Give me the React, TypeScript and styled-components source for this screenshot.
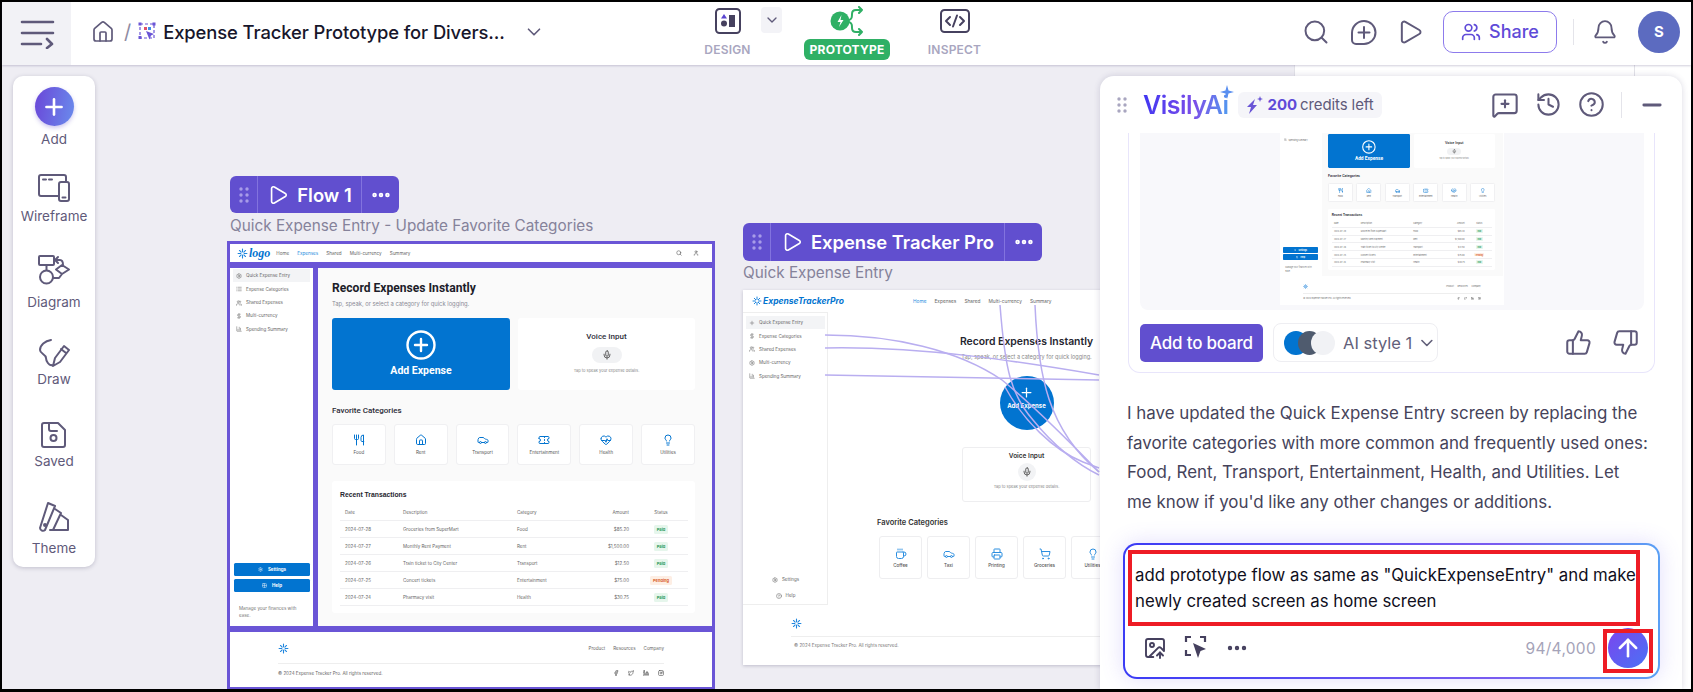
import React from "react";
import styled, { createGlobalStyle } from "styled-components";
import {
  ArrowUp,
  Bell,
  Car,
  ChartColumn,
  ChevronDown,
  CircleHelp,
  Coffee,
  DollarSign,
  Ellipsis,
  Facebook,
  Grid2x2,
  HeartPulse,
  History,
  House,
  ImageUp,
  Instagram,
  Lightbulb,
  Linkedin,
  List,
  MessageSquarePlus,
  Mic,
  Minus,
  Play,
  Plus,
  Printer,
  Search,
  Settings,
  ShoppingCart,
  ThumbsDown,
  ThumbsUp,
  Ticket,
  Twitter,
  User,
  Users,
  Utensils,
} from "lucide-react";

const GlobalStyle = createGlobalStyle`
  html, body {
    margin: 0;
    padding: 0;
    background: #000;
  }
  * {
    box-sizing: border-box;
  }
`;

const ink = "#5f5a7a";
const blue = "#0274d0";
const purple = "#6a55d6";

/* ---------- drawn icons ---------- */

const MenuIcon = () => (
  <svg width="36" height="30" viewBox="0 0 36 30" fill="none" stroke={ink} strokeWidth="2.6" strokeLinecap="round" strokeLinejoin="round">
    <path d="M3 3h31M3 14h31M3 25h19M28 20l5 5-5 4" />
  </svg>
);

const FileMark = () => (
  <svg width="18" height="20" viewBox="0 0 18 20" fill="none">
    <path d="M2 2h14v14H2z" stroke="#6a55d6" strokeWidth="1.2" strokeDasharray="3 2" />
    <rect x="0.5" y="0.5" width="3" height="3" fill="#6a55d6" />
    <rect x="14.5" y="0.5" width="3" height="3" fill="#6a55d6" />
    <rect x="0.5" y="14" width="3" height="3" fill="#6a55d6" />
    <rect x="6" y="5" width="3" height="3" fill="#e0506a" />
    <rect x="10" y="5" width="3" height="3" fill="#3f8ee8" />
    <path d="M8 9l8 3-3 1.5-1.5 4z" fill="#6a55d6" />
  </svg>
);

const LogoMark = ({ size }: { size: number }) => (
  <svg width={size} height={size} viewBox="0 0 20 20" fill="none" stroke="#1f86de" strokeWidth="2" strokeLinecap="round">
    <path d="M10 2v5M10 13v5M2 10h5M13 10h5M4.500 4.500l3 3M12.500 12.500l3 3M15.500 4.500l-3 3M7.500 12.500l-3 3" />
  </svg>
);

const DesignIcon = () => (
  <svg width="26" height="26" viewBox="0 0 26 26" fill="none">
    <rect x="1" y="1" width="24" height="24" rx="3.5" stroke="#46415f" strokeWidth="2" />
    <path d="M9 6l3 4.4H6z" fill="#5a45d0" />
    <circle cx="9" cy="15.5" r="3" fill="#46415f" />
    <rect x="14" y="7" width="6" height="12" fill="#46415f" />
  </svg>
);

const PrototypeIcon = () => (
  <svg width="34" height="30" viewBox="0 0 34 30" fill="none">
    <circle cx="10" cy="15" r="9.5" fill="#2fb065" />
    <path d="M11.5 9l-4 7h3l-1.500 5 4.500-7h-3z" fill="#fff" />
    <path d="M19 14c3-1 3-3 3-6 0-3 2-4 4-4h6M19 16c3 1 3 3 3 6 0 3 2 4 4 4h6M29 1l3 3-3 3M29 23l3 3-3 3" stroke="#2fb065" strokeWidth="2" strokeLinecap="round" strokeLinejoin="round" />
  </svg>
);

const InspectIcon = () => (
  <svg width="30" height="24" viewBox="0 0 30 24" fill="none" stroke="#46415f" strokeWidth="2" strokeLinecap="round" strokeLinejoin="round">
    <rect x="1" y="1" width="28" height="22" rx="3.5" />
    <path d="M10 8l-4 4 4 4M20 8l4 4-4 4M17 6.500l-4 11" />
  </svg>
);

const PlusChatIcon = () => (
  <svg width="28" height="28" viewBox="0 0 28 28" fill="none" stroke={ink} strokeWidth="2" strokeLinecap="round" strokeLinejoin="round">
    <path d="M15 3a11.500 11.500 0 1 1 0 23H7a4 4 0 0 1-4-4v-7A12 12 0 0 1 15 3z" />
    <path d="M15 9v11M9.500 14.500h11" />
  </svg>
);

const WireframeIcon = () => (
  <svg width="34" height="30" viewBox="0 0 34 30" fill="none" stroke={ink} strokeWidth="2" strokeLinecap="round" strokeLinejoin="round">
    <path d="M22 23H4a2 2 0 0 1-2-2V4a2 2 0 0 1 2-2h23a2 2 0 0 1 2 2v4" />
    <path d="M6 6.500h3M12 6.500h3" />
    <rect x="22" y="9" width="10" height="19" rx="2" />
    <path d="M25.500 24.500h3" />
  </svg>
);

const DiagramIcon = () => (
  <svg width="34" height="32" viewBox="0 0 34 32" fill="none" stroke={ink} strokeWidth="2" strokeLinecap="round" strokeLinejoin="round">
    <rect x="2" y="2" width="15" height="9" rx="1" />
    <path d="M9.500 11v5" />
    <circle cx="9.500" cy="23" r="6.500" />
    <path d="M25 11l7 4.500-7 4.500-6-4.500zM16 24h6l3-4M19 6h4c2 0 3 2 3 5M21 3l-3 3 3 3" />
  </svg>
);

const DrawIcon = () => (
  <svg width="32" height="30" viewBox="0 0 32 30" fill="none" stroke={ink} strokeWidth="2" strokeLinecap="round" strokeLinejoin="round">
    <path d="M13 2C7 3 2 7 2 12c0 4 6 4 6 8 0 3 3 8 6 7" />
    <path d="M15 28l2-8 9-12 5 4-9 12z M23 11l5 4" />
  </svg>
);

const SavedIcon = () => (
  <svg width="26" height="28" viewBox="0 0 26 28" fill="none" stroke={ink} strokeWidth="2" strokeLinecap="round" strokeLinejoin="round">
    <path d="M3 2h14l7 7v15a2 2 0 0 1-2 2H3a2 2 0 0 1-2-2V4a2 2 0 0 1 2-2z" />
    <path d="M8 2v6a2 2 0 0 0 2 2h6" />
    <circle cx="12.500" cy="17" r="3" />
  </svg>
);

const ThemeIcon = () => (
  <svg width="32" height="32" viewBox="0 0 32 32" fill="none" stroke={ink} strokeWidth="2" strokeLinecap="round" strokeLinejoin="round">
    <path d="M10 2l7 3-10 24a3 3 0 0 1-5-2z" />
    <path d="M17 8l6 4-8 17M23 14l7 5v10H12" />
    <circle cx="7" cy="24" r="1" />
  </svg>
);

const CursorFrameIcon = () => (
  <svg width="24" height="26" viewBox="0 0 24 26" fill="none">
    <path d="M2 7V2h5M16 2h5v5M2 15v5h5" stroke="#45405e" strokeWidth="2.200" />
    <path d="M9 8l13 6-5.500 2-2.500 7z" fill="#45405e" />
  </svg>
);

const Sparkle = () => (
  <svg width="14" height="14" viewBox="0 0 14 14">
    <path d="M7 0l1.500 5.500L14 7l-5.500 1.500L7 14 5.500 8.500 0 7l5.500-1.500z" fill="#5a8ff0" />
  </svg>
);

const CreditBolt = () => (
  <svg width="20" height="20" viewBox="0 0 20 20">
    <path d="M10 4L2 12h4l-2 7 8-9H8z" fill="#6a55d6" />
    <path d="M15 1l.8 2.200L18 4l-2.200.8L15 7l-.8-2.200L12 4l2.200-.8z" fill="#6a55d6" />
  </svg>
);

const DragDots = ({ color }: { color: string }) => (
  <svg width="10" height="16" viewBox="0 0 10 16" fill={color}>
    <circle cx="2" cy="2" r="1.700" />
    <circle cx="8" cy="2" r="1.700" />
    <circle cx="2" cy="8" r="1.700" />
    <circle cx="8" cy="8" r="1.700" />
    <circle cx="2" cy="14" r="1.700" />
    <circle cx="8" cy="14" r="1.700" />
  </svg>
);

/* ---------- page frame ---------- */

const Page = styled.div`
  width: 1693px;
  height: 692px;
  background: #000;
  padding: 2px 2px 3px 2px;
  display: flex;
  flex-direction: column;
  overflow: hidden;
`;

const Header = styled.header`
  height: 63px;
  flex: none;
  display: flex;
  align-items: stretch;
  background: #fff;
  position: relative;
  z-index: 5;
  box-shadow: 0 1px 2px rgba(70, 65, 110, 0.25);
  font-family: Inter, sans-serif;
`;

const MenuCell = styled.div`
  width: 69px;
  flex: none;
  background: #f2f2f6;
  display: flex;
  align-items: center;
  justify-content: center;
`;

const Breadcrumb = styled.div`
  width: 634px;
  flex: none;
  display: flex;
  align-items: center;
  padding: 0 0 4px 20px;
  color: ${ink};
`;

const Slash = styled.span`
  font-size: 20px;
  color: #8f8ca3;
  margin: 0 7px 0 9px;
`;

const DocTitle = styled.span`
  font-size: 18.400px;
  font-weight: 500;
  color: #17162b;
  letter-spacing: -0.1px;
  margin: 0 18px 0 7px;
  white-space: nowrap;
`;

const Modes = styled.div`
  width: 597px;
  flex: none;
  display: flex;
  align-items: flex-start;
`;

const Mode = styled.div<{ $w: number; $ml?: number }>`
  width: ${(p) => p.$w}px;
  margin-left: ${(p) => p.$ml || 0}px;
  display: flex;
  flex-direction: column;
  align-items: center;
`;

const ModeIcon = styled.div`
  height: 34px;
  padding-top: 3px;
  display: flex;
  align-items: center;
  justify-content: center;
`;

const ModeLabel = styled.div<{ $active?: boolean }>`
  height: 21px;
  margin-top: 3px;
  width: 100%;
  display: flex;
  align-items: center;
  justify-content: center;
  font-size: 12px;
  font-weight: ${(p) => (p.$active ? 700 : 600)};
  letter-spacing: 0.2px;
  color: ${(p) => (p.$active ? "#fff" : "#a9a6c0")};
  background: ${(p) => (p.$active ? "#2fb065" : "transparent")};
  border-radius: 6px;
`;

const ModeCaret = styled.div`
  width: 21px;
  height: 26px;
  margin: 5px 0 0 11px;
  border-radius: 4px;
  background: #f3f3f7;
  color: ${ink};
  display: flex;
  align-items: center;
  justify-content: center;
`;

const HeaderTools = styled.div`
  flex: 1;
  display: flex;
  align-items: center;
  justify-content: flex-end;
  gap: 19px;
  padding: 0 11px 4px 0;
  color: ${ink};
`;

const ToolSlot = styled.div`
  width: 28px;
  height: 28px;
  display: flex;
  align-items: center;
  justify-content: center;
`;

const ShareButton = styled.div`
  width: 114px;
  height: 42px;
  border: 1.5px solid #8d7bec;
  border-radius: 10px;
  display: flex;
  align-items: center;
  justify-content: center;
  gap: 8px;
  color: #5f4bd8;
  font-size: 18px;
  font-weight: 500;
`;

const VRule = styled.div<{ $h: number }>`
  width: 1px;
  height: ${(p) => p.$h}px;
  background: #e4e4ea;
`;

const HeaderRule = styled(VRule)`
  margin: 0 -2px 0 -3px;
`;

const Avatar = styled.div`
  width: 42px;
  height: 42px;
  border-radius: 50%;
  background: #5c6bc0;
  color: #fff;
  font-size: 15px;
  font-weight: 700;
  display: flex;
  align-items: center;
  justify-content: center;
`;

/* ---------- canvas ---------- */

const Canvas = styled.main`
  flex: 1;
  position: relative;
  background: #eeedf3;
  overflow: hidden;
  font-family: Inter, sans-serif;
`;

const Node = styled.div<{ $x: number; $y: number; $z?: number }>`
  position: absolute;
  left: ${(p) => p.$x - 2}px;
  top: ${(p) => p.$y - 65}px;
  z-index: ${(p) => p.$z || 1};
`;

const BackFrame = styled.div<{ $w: number }>`
  width: ${(p) => p.$w}px;
  height: 624px;
  background: #fff;
  border-left: 1px solid #e2e2e8;
`;

const Toolbar = styled.nav`
  width: 82px;
  height: 491px;
  background: #fff;
  border-radius: 10px;
  box-shadow: 0 1px 4px rgba(60, 55, 90, 0.25);
  padding-top: 11px;
  display: flex;
  flex-direction: column;
  align-items: center;
`;

const ToolItem = styled.div<{ $h: number }>`
  height: ${(p) => p.$h}px;
  display: flex;
  flex-direction: column;
  align-items: center;
`;

const ToolIcon = styled.div`
  height: 32px;
  display: flex;
  align-items: center;
  justify-content: center;
`;

const ToolLabel = styled.div<{ $gap: number }>`
  margin-top: ${(p) => p.$gap}px;
  height: 16px;
  line-height: 16px;
  font-size: 13.500px;
  color: ${ink};
`;

const AddCircle = styled.div`
  width: 39px;
  height: 39px;
  border-radius: 50%;
  background: linear-gradient(100deg, #6a46d8, #6a8cec);
  box-shadow: 0 2px 4px rgba(90, 70, 200, 0.3);
  color: #fff;
  display: flex;
  align-items: center;
  justify-content: center;
`;

const FlowBar = styled.div<{ $h: number; $ml?: number }>`
  height: ${(p) => p.$h}px;
  margin-left: ${(p) => p.$ml || 0}px;
  display: inline-flex;
  align-self: flex-start;
  align-items: stretch;
  background: #614fcf;
  border-radius: 6px;
  color: #fff;
`;

const FlowCell = styled.div<{ $w: number; $rule?: boolean }>`
  width: ${(p) => p.$w}px;
  display: flex;
  align-items: center;
  justify-content: center;
  gap: 8px;
  border-left: ${(p) => (p.$rule ? "1px solid #8273de" : "none")};
  font-size: 18.400px;
  font-weight: 600;
  white-space: nowrap;
`;

const Column = styled.div`
  display: flex;
  flex-direction: column;
`;

const Caption = styled.div<{ $mt: number; $mb: number; $ml?: number }>`
  height: 20px;
  line-height: 20px;
  margin: ${(p) => p.$mt}px 0 ${(p) => p.$mb}px ${(p) => p.$ml || 0}px;
  font-size: 15.300px;
  color: #85829a;
  white-space: nowrap;
`;

/* ---------- first screen, also used for the chat preview ---------- */

const ScreenFrame = styled.div<{ $plain?: boolean }>`
  width: 488px;
  height: ${(p) => (p.$plain ? "auto" : "448px")};
  padding: 3px 3px 2px;
  background: ${(p) => (p.$plain ? "#fff" : purple)};
  display: grid;
  grid-template-columns: 83px 394px;
  grid-template-rows: ${(p) => (p.$plain ? "358px 55px" : "18px 358px 55px")};
  column-gap: 5px;
  row-gap: 6px;
  font-family: Inter, sans-serif;
  color: #55536a;
`;

const TopBar = styled.div`
  grid-column: 1 / 3;
  background: #fff;
  display: flex;
  align-items: center;
  padding: 0 9px 0 7px;
  font-size: 4.600px;
`;

const ScriptLogo = styled.span`
  font-family: "Liberation Serif", serif;
  font-style: italic;
  font-weight: 700;
  font-size: 12px;
  color: ${blue};
  margin: 0 6px 0 1px;
`;

const TopLink = styled.span<{ $active?: boolean }>`
  margin-right: 8px;
  color: ${(p) => (p.$active ? "#2a8ee0" : "#666")};
  white-space: nowrap;
`;

const TopIcons = styled.div`
  margin-left: auto;
  display: flex;
  gap: 11px;
  padding-right: 4px;
  color: #444;
`;

const SideBar = styled.aside`
  background: #fff;
  display: flex;
  flex-direction: column;
  justify-content: flex-end;
  padding: 0 3px 7px;
  font-size: 4.500px;
`;

const SideItem = styled.div<{ $active?: boolean }>`
  height: 13.400px;
  flex: none;
  display: flex;
  align-items: center;
  gap: 4px;
  padding-left: 3px;
  background: ${(p) => (p.$active ? "#f3f4f6" : "transparent")};
  color: #666;
  white-space: nowrap;
`;

const SideButton = styled.div<{ $mt: number }>`
  height: 13px;
  flex: none;
  margin: ${(p) => p.$mt}px 0 0 1px;
  background: ${blue};
  color: #fff;
  border-radius: 1.500px;
  font-weight: 700;
  display: flex;
  align-items: center;
  justify-content: center;
  gap: 5px;
`;

const SideNote = styled.div`
  margin: 13px 0 0 6px;
  width: 68px;
  line-height: 7px;
  color: #777;
`;

const MainArea = styled.section`
  background: #fafafa;
  padding: 12px 17px 13px 14px;
  display: flex;
  flex-direction: column;
  justify-content: flex-end;
`;

const ScreenTitle = styled.div`
  height: 14px;
  line-height: 14px;
  font-family: Roboto, sans-serif;
  font-size: 12.100px;
  font-weight: 700;
  color: #1d1d2a;
  white-space: nowrap;
`;

const ScreenSub = styled.div`
  margin-top: 5px;
  height: 8px;
  line-height: 8px;
  font-size: 5.800px;
  color: #8a8a96;
  white-space: nowrap;
`;

const HeroRow = styled.div`
  margin-top: 10px;
  display: grid;
  grid-template-columns: 178px 177px;
  column-gap: 8px;
  height: 72px;
  flex: none;
`;

const AddCard = styled.div`
  background: ${blue};
  border-radius: 3px;
  color: #fff;
  display: flex;
  flex-direction: column;
  align-items: center;
  padding-top: 12px;
  font-family: Roboto, sans-serif;
  font-size: 10.500px;
  font-weight: 700;
  gap: 4px;
`;

const VoiceCard = styled.div`
  background: #fff;
  border-radius: 3px;
  display: flex;
  flex-direction: column;
  align-items: center;
  padding-top: 14px;
  font-family: Roboto, sans-serif;
  font-size: 8px;
  font-weight: 500;
  color: #30303c;
`;

const MicPill = styled.div`
  width: 30px;
  height: 16px;
  margin-top: 6px;
  border-radius: 8px;
  background: #f1f2f4;
  color: #444;
  display: flex;
  align-items: center;
  justify-content: center;
`;

const TinyNote = styled.div`
  margin-top: 5px;
  font-family: Inter, sans-serif;
  font-weight: 400;
  font-size: 4px;
  color: #888;
`;

const SectionTitle = styled.div`
  margin-top: 15px;
  height: 12px;
  line-height: 12px;
  font-family: Roboto, sans-serif;
  font-size: 8px;
  font-weight: 500;
  color: #2a2a36;
`;

const CategoryGrid = styled.div`
  margin-top: 7px;
  height: 41px;
  flex: none;
  display: grid;
  grid-template-columns: repeat(6, 1fr);
  column-gap: 8px;
`;

const CategoryCard = styled.div`
  background: #fff;
  border: 0.500px solid #f0f0f2;
  border-radius: 3px;
  display: flex;
  flex-direction: column;
  align-items: center;
  justify-content: center;
  gap: 4px;
  color: ${blue};
  font-size: 4.500px;
`;

const CategoryName = styled.span`
  color: #555;
`;

const RecentCard = styled.div`
  margin-top: 16px;
  width: 363px;
  height: 132px;
  flex: none;
  background: #fff;
  border-radius: 3px;
  padding: 8px 7px 8px 8px;
`;

const RecentTitle = styled.div`
  height: 12px;
  line-height: 12px;
  margin: 0 0 3px;
  font-family: "Liberation Sans", sans-serif;
  font-size: 6.800px;
  font-weight: 700;
  color: #26262f;
`;

const TableRow = styled.div`
  height: 17px;
  display: grid;
  grid-template-columns: 58px 114px 73px 49px 54px;
  align-items: center;
  border-bottom: 0.500px solid #efeff1;
  font-size: 4.500px;
  color: #666;
  white-space: nowrap;
`;

const Cell = styled.div<{ $align?: string }>`
  padding: 0 5px;
  text-align: ${(p) => p.$align || "left"};
`;

const StatusTag = styled.span<{ $pending?: boolean }>`
  display: inline-block;
  padding: 2px 3px;
  border-radius: 1.500px;
  font-size: 4px;
  font-weight: 700;
  background: ${(p) => (p.$pending ? "#fdeee4" : "#e6f6ec")};
  color: ${(p) => (p.$pending ? "#d9622b" : "#2a9a5a")};
`;

const BottomBar = styled.footer`
  grid-column: 1 / 3;
  background: #fff;
  padding: 9px 48px 0;
  font-size: 4.500px;
  color: #666;
`;

const BottomTop = styled.div`
  display: flex;
  align-items: center;
  justify-content: space-between;
  height: 16px;
  padding-bottom: 2px;
  color: ${blue};
`;

const BottomLinks = styled.div`
  display: flex;
  gap: 8px;
  color: #666;
`;

const BottomLine = styled.div`
  display: flex;
  align-items: center;
  justify-content: space-between;
  margin-top: 6px;
  padding-top: 6px;
  border-top: 0.500px solid #eee;
`;

const Socials = styled.div`
  display: flex;
  gap: 9px;
  color: #333;
`;

const rows = [
  ["2024-07-28", "Groceries from SuperMart", "Food", "$85.20", "Paid"],
  ["2024-07-27", "Monthly Rent Payment", "Rent", "$1,500.00", "Paid"],
  ["2024-07-26", "Train ticket to City Center", "Transport", "$12.50", "Paid"],
  ["2024-07-25", "Concert tickets", "Entertainment", "$75.00", "Pending"],
  ["2024-07-24", "Pharmacy visit", "Health", "$30.75", "Paid"],
];

const categories = [
  { name: "Food", Icon: Utensils },
  { name: "Rent", Icon: House },
  { name: "Transport", Icon: Car },
  { name: "Entertainment", Icon: Ticket },
  { name: "Health", Icon: HeartPulse },
  { name: "Utilities", Icon: Lightbulb },
];

// plain: the version inside the chat preview, scrolled so only its lower part shows
const QuickEntryScreen = ({ plain }: { plain?: boolean }) => (
  <ScreenFrame $plain={plain}>
    {!plain && (
      <TopBar>
        <LogoMark size={11} />
        <ScriptLogo>logo</ScriptLogo>
        <TopLink>Home</TopLink>
        <TopLink $active>Expenses</TopLink>
        <TopLink>Shared</TopLink>
        <TopLink>Multi-currency</TopLink>
        <TopLink>Summary</TopLink>
        <TopIcons>
          <Search size={6} />
          <User size={6} />
        </TopIcons>
      </TopBar>
    )}
    <SideBar>
      {!plain && (
        <>
          <SideItem $active>
            <Settings size={6} />
            Quick Expense Entry
          </SideItem>
          <SideItem>
            <List size={6} />
            Expense Categories
          </SideItem>
          <SideItem>
            <Users size={6} />
            Shared Expenses
          </SideItem>
          <SideItem>
            <DollarSign size={6} />
            Multi-currency
          </SideItem>
        </>
      )}
      <SideItem>
        <ChartColumn size={6} />
        Spending Summary
      </SideItem>
      <SideButton $mt={227}>
        <Settings size={5} />
        Settings
      </SideButton>
      <SideButton $mt={3}>
        <Grid2x2 size={5} />
        Help
      </SideButton>
      <SideNote>Manage your finances with ease.</SideNote>
    </SideBar>
    <MainArea>
      {!plain && (
        <>
          <ScreenTitle>Record Expenses Instantly</ScreenTitle>
          <ScreenSub>Tap, speak, or select a category for quick logging.</ScreenSub>
        </>
      )}
      <HeroRow>
        <AddCard>
          <svg width="30" height="30" viewBox="0 0 30 30" fill="none" stroke="#fff" strokeWidth="2.400" strokeLinecap="round">
            <circle cx="15" cy="15" r="13.500" />
            <path d="M15 9v12M9 15h12" />
          </svg>
          Add Expense
        </AddCard>
        <VoiceCard>
          Voice Input
          <MicPill>
            <Mic size={10} />
          </MicPill>
          <TinyNote>Tap to speak your expense details.</TinyNote>
        </VoiceCard>
      </HeroRow>
      <SectionTitle>Favorite Categories</SectionTitle>
      <CategoryGrid>
        {categories.map(({ name, Icon }) => (
          <CategoryCard key={name}>
            <Icon size={12} />
            <CategoryName>{name}</CategoryName>
          </CategoryCard>
        ))}
      </CategoryGrid>
      <RecentCard>
        <RecentTitle>Recent Transactions</RecentTitle>
        <TableRow>
          <Cell>Date</Cell>
          <Cell>Description</Cell>
          <Cell>Category</Cell>
          <Cell $align="right">Amount</Cell>
          <Cell $align="center">Status</Cell>
        </TableRow>
        {rows.map((r) => (
          <TableRow key={r[0]}>
            <Cell>{r[0]}</Cell>
            <Cell>{r[1]}</Cell>
            <Cell>{r[2]}</Cell>
            <Cell $align="right">{r[3]}</Cell>
            <Cell $align="center">
              <StatusTag $pending={r[4] === "Pending"}>{r[4]}</StatusTag>
            </Cell>
          </TableRow>
        ))}
      </RecentCard>
    </MainArea>
    <BottomBar>
      <BottomTop>
        <LogoMark size={11} />
        <BottomLinks>
          <span>Product</span>
          <span>Resources</span>
          <span>Company</span>
        </BottomLinks>
      </BottomTop>
      <BottomLine>
        <span>© 2024 Expense Tracker Pro. All rights reserved.</span>
        <Socials>
          <Facebook size={6} />
          <Twitter size={6} />
          <Linkedin size={6} />
          <Instagram size={6} />
        </Socials>
      </BottomLine>
    </BottomBar>
  </ScreenFrame>
);

/* ---------- second screen ---------- */

const ProScreen = styled.div`
  position: relative;
  width: 482px;
  height: 375px;
  background: #fff;
  box-shadow: 0 1px 3px rgba(60, 55, 90, 0.25);
  display: grid;
  grid-template-columns: 85px 397px;
  grid-template-rows: 22px 293px 60px;
  font-size: 4.500px;
  color: #666;
`;

const ProTop = styled.div`
  grid-column: 1 / 3;
  display: flex;
  align-items: center;
  padding-left: 9px;
  font-size: 4.800px;
`;

const ProLogo = styled.span`
  width: 161px;
  display: flex;
  align-items: center;
  gap: 1px;
  font-size: 8.500px;
  font-style: italic;
  font-weight: 700;
  color: ${blue};
`;

const ProSide = styled.aside`
  border-top: 0.500px solid #eee;
  border-right: 0.500px solid #eee;
  border-bottom: 0.500px solid #eee;
  padding: 3px 2px 0 3px;
  display: flex;
  flex-direction: column;
`;

const ProHelp = styled.div<{ $mt: number }>`
  margin-top: ${(p) => p.$mt}px;
  height: 12px;
  flex: none;
  display: flex;
  align-items: center;
  justify-content: center;
  gap: 4px;
`;

const ProMain = styled.section`
  padding-top: 22px;
  display: flex;
  flex-direction: column;
`;

const ProCentered = styled.div`
  width: 397px;
  display: flex;
  flex-direction: column;
  align-items: center;
`;

const ProTitle = styled.div`
  height: 16px;
  line-height: 16px;
  font-size: 10.400px;
  font-weight: 600;
  color: #26262f;
  white-space: nowrap;
`;

const ProSub = styled.div`
  margin-top: 3px;
  height: 8px;
  line-height: 8px;
  font-size: 5.500px;
  color: #888;
  white-space: nowrap;
`;

const ProAdd = styled.div`
  width: 54px;
  height: 54px;
  margin-top: 15px;
  border-radius: 50%;
  background: ${blue};
  color: #fff;
  display: flex;
  flex-direction: column;
  align-items: center;
  padding-top: 9px;
  font-size: 6px;
  font-weight: 700;
  white-space: nowrap;
  gap: 2px;
`;

const ProVoice = styled.div`
  margin-top: 17px;
  width: 129px;
  height: 55px;
  border: 0.500px solid #eeeef0;
  border-radius: 3px;
  display: flex;
  flex-direction: column;
  align-items: center;
  padding-top: 4px;
  font-size: 6.500px;
  font-weight: 600;
  color: #333;
`;

const ProMic = styled.div`
  width: 18px;
  height: 18px;
  margin-top: 3px;
  border-radius: 50%;
  background: #f2f3f5;
  color: #444;
  display: flex;
  align-items: center;
  justify-content: center;
`;

const ProNote = styled.div`
  margin-top: 3px;
  font-weight: 400;
  font-size: 4px;
  color: #888;
`;

const ProSection = styled.div`
  margin: 15px 0 0 49px;
  height: 12px;
  line-height: 12px;
  font-size: 7.500px;
  font-weight: 600;
  color: #333;
`;

const ProCategories = styled.div`
  margin: 7px 0 0 51px;
  display: flex;
  gap: 5px;
`;

const ProCategory = styled.div`
  width: 43px;
  height: 43px;
  border: 0.500px solid #eeeef0;
  border-radius: 3px;
  display: flex;
  flex-direction: column;
  align-items: center;
  justify-content: center;
  gap: 3px;
  color: #2a8ee0;
  font-size: 4.500px;
  font-weight: 500;
`;

const ProFooter = styled.footer`
  grid-column: 1 / 3;
  padding: 13px 0 0 48px;
  color: #2a8ee0;
`;

const ProCopyright = styled.div`
  margin-top: 6px;
  padding: 6px 0 0 3px;
  border-top: 0.500px solid #eee;
  color: #777;
`;

const Connectors = styled.svg`
  position: absolute;
  inset: 0;
  pointer-events: none;
`;

const proCategories = [
  { name: "Coffee", Icon: Coffee },
  { name: "Taxi", Icon: Car },
  { name: "Printing", Icon: Printer },
  { name: "Groceries", Icon: ShoppingCart },
  { name: "Utilities", Icon: Lightbulb },
];

const ExpenseProScreen = () => (
  <ProScreen>
    <ProTop>
      <ProLogo>
        <LogoMark size={10} />
        ExpenseTrackerPro
      </ProLogo>
      <TopLink $active>Home</TopLink>
      <TopLink>Expenses</TopLink>
      <TopLink>Shared</TopLink>
      <TopLink>Multi-currency</TopLink>
      <TopLink>Summary</TopLink>
    </ProTop>
    <ProSide>
      <SideItem $active>
        <Plus size={6} />
        Quick Expense Entry
      </SideItem>
      <SideItem>
        <DollarSign size={6} />
        Expense Categories
      </SideItem>
      <SideItem>
        <Users size={6} />
        Shared Expenses
      </SideItem>
      <SideItem>
        <Settings size={6} />
        Multi-currency
      </SideItem>
      <SideItem>
        <ChartColumn size={6} />
        Spending Summary
      </SideItem>
      <ProHelp $mt={191}>
        <Settings size={6} />
        Settings
      </ProHelp>
      <ProHelp $mt={4}>
        <CircleHelp size={6} />
        Help
      </ProHelp>
    </ProSide>
    <ProMain>
      <ProCentered>
        <ProTitle>Record Expenses Instantly</ProTitle>
        <ProSub>Tap, speak, or select a category for quick logging.</ProSub>
        <ProAdd>
          <Plus size={15} />
          Add Expense
        </ProAdd>
        <ProVoice>
          Voice Input
          <ProMic>
            <Mic size={10} />
          </ProMic>
          <ProNote>Tap to speak your expense details.</ProNote>
        </ProVoice>
      </ProCentered>
      <ProSection>Favorite Categories</ProSection>
      <ProCategories>
        {proCategories.map(({ name, Icon }) => (
          <ProCategory key={name}>
            <Icon size={12} />
            <CategoryName>{name}</CategoryName>
          </ProCategory>
        ))}
      </ProCategories>
    </ProMain>
    <ProFooter>
      <LogoMark size={11} />
      <ProCopyright>© 2024 Expense Tracker Pro. All rights reserved.</ProCopyright>
    </ProFooter>
    <Connectors width="482" height="375" viewBox="0 0 482 375" fill="none" stroke="#b9aef0" strokeWidth="1.500">
      <path d="M82 45C150 45 215 60 259 90C290 115 320 145 356 182" />
      <path d="M82 58C180 56 280 72 356 85" />
      <path d="M82 85L356 90" />
      <path d="M257 15C262 80 268 105 290 130C310 155 335 175 356 185" />
      <path d="M292 15C295 85 305 140 356 182" />
      <path d="M262 97C280 130 310 160 340 172L356 178" />
    </Connectors>
  </ProScreen>
);

/* ---------- Visily AI panel ---------- */

const Panel = styled.aside`
  width: 582px;
  height: 613px;
  background: #fff;
  border-radius: 14px 14px 0 0;
  box-shadow: 0 0 6px rgba(70, 65, 110, 0.2);
  display: flex;
  flex-direction: column;
  color: ${ink};
`;

const PanelHead = styled.div`
  height: 57px;
  flex: none;
  display: flex;
  align-items: center;
  padding: 0 16px 0 17px;
`;

const Brand = styled.div`
  position: relative;
  margin-left: 16px;
  font-size: 25px;
  font-weight: 600;
  letter-spacing: -0.500px;
  background: linear-gradient(100deg, #3f35f2 0%, #7c4fe8 60%, #4f9ff0 100%);
  -webkit-background-clip: text;
  background-clip: text;
  color: transparent;
`;

const BrandSpark = styled.span`
  position: absolute;
  right: -5px;
  top: -5px;
  display: flex;
`;

const CreditChip = styled.div`
  margin-left: 9px;
  height: 26px;
  padding: 0 8px 0 7px;
  display: flex;
  align-items: center;
  gap: 3px;
  border-radius: 6px;
  background: #f5f5f9;
  font-size: 15px;
  letter-spacing: -0.100px;
  white-space: nowrap;
`;

const CreditCount = styled.strong`
  font-weight: 700;
  color: #5f4bd8;
`;

const HeadIcons = styled.div`
  margin-left: auto;
  display: flex;
  align-items: center;
  gap: 16px;
`;

const PanelBody = styled.div`
  flex: 1;
  padding: 0 22px 0 23px;
  overflow: hidden;
`;

const MessageCard = styled.div`
  margin-left: 5px;
  width: 527px;
  border: 1px solid #e8e5fb;
  border-top: none;
  border-radius: 0 0 12px 12px;
  padding: 0 10px 10px 11px;
`;

const Preview = styled.div`
  height: 177px;
  padding-bottom: 5px;
  background: #f8f8fb;
  border-radius: 0 0 8px 8px;
  overflow: hidden;
  display: flex;
  justify-content: center;
  align-items: flex-end;
`;

const PreviewScale = styled.div`
  zoom: 0.46;
  flex: none;
`;

const CardActions = styled.div`
  margin-top: 13px;
  display: flex;
  align-items: center;
`;

const BoardButton = styled.div`
  width: 123px;
  height: 38px;
  border-radius: 5px;
  background: #614fcf;
  color: #fff;
  font-size: 17px;
  font-weight: 500;
  letter-spacing: -0.200px;
  display: flex;
  align-items: center;
  justify-content: center;
`;

const StyleSelect = styled.div`
  margin-left: 10px;
  width: 165px;
  height: 39px;
  border: 1px solid #eeeef2;
  border-radius: 8px;
  padding-left: 10px;
  display: flex;
  align-items: center;
  font-size: 16.500px;
  color: #62607a;
  white-space: nowrap;
`;

const Swatch = styled.span<{ $c: string; $first?: boolean }>`
  width: 24px;
  height: 24px;
  border-radius: 50%;
  background: ${(p) => p.$c};
  margin-left: ${(p) => (p.$first ? 0 : -10)}px;
`;

const StyleName = styled.span`
  margin: 0 5px 0 8px;
`;

const Feedback = styled.div`
  margin-left: auto;
  margin-right: 5px;
  display: flex;
  gap: 20px;
`;

const Reply = styled.p`
  margin: 26px 0 0 4px;
  width: 532px;
  font-size: 16.900px;
  line-height: 29.600px;
  color: #45435a;
`;

const InputBox = styled.div`
  position: relative;
  width: 537px;
  height: 136px;
  margin-top: 26px;
  border: 2px solid transparent;
  border-radius: 14px;
  background: linear-gradient(#fff, #fff) padding-box,
    linear-gradient(90deg, #3b3cf5, #7a5cf0 70%, #5aa0f5) border-box;
  box-shadow: 0 0 22px rgba(110, 90, 240, 0.2);
`;

const Prompt = styled.div`
  padding: 17px 0 0 10px;
  width: 524px;
  font-size: 16.800px;
  line-height: 26px;
  font-weight: 400;
  color: #0f0e20;
`;

const InputFoot = styled.div`
  margin-top: 14px;
  padding: 0 10px 0 18px;
  display: flex;
  align-items: center;
  gap: 17px;
  color: #45405e;
`;

const Counter = styled.span`
  margin-left: auto;
  margin-right: -5px;
  font-size: 15.500px;
  letter-spacing: 0.300px;
  color: #a5a3b8;
`;

const SendButton = styled.div`
  width: 40px;
  height: 40px;
  border-radius: 50%;
  background: linear-gradient(135deg, #7b45ee, #4a72f5);
  color: #fff;
  display: flex;
  align-items: center;
  justify-content: center;
`;

const RedMark = styled.div<{ $l: number; $t: number; $w: number; $h: number }>`
  position: absolute;
  left: ${(p) => p.$l}px;
  top: ${(p) => p.$t}px;
  width: ${(p) => p.$w}px;
  height: ${(p) => p.$h}px;
  border: 4px solid #ee1c25;
  pointer-events: none;
`;

const tools = [
  { label: "Wireframe", icon: <WireframeIcon />, gap: 4, h: 82 },
  { label: "Diagram", icon: <DiagramIcon />, gap: 8, h: 83 },
  { label: "Draw", icon: <DrawIcon />, gap: 2, h: 82 },
  { label: "Saved", icon: <SavedIcon />, gap: 2, h: 82 },
  { label: "Theme", icon: <ThemeIcon />, gap: 7, h: 60 },
];

export default function App() {
  return (
    <>
      <GlobalStyle />
      <Page>
        <Header>
          <MenuCell>
            <MenuIcon />
          </MenuCell>
          <Breadcrumb>
            <House size={24} strokeWidth={1.7} />
            <Slash>/</Slash>
            <FileMark />
            <DocTitle>Expense Tracker Prototype for Divers...</DocTitle>
            <ChevronDown size={22} strokeWidth={1.8} />
          </Breadcrumb>
          <Modes>
            <Mode $w={45}>
              <ModeIcon>
                <DesignIcon />
              </ModeIcon>
              <ModeLabel>DESIGN</ModeLabel>
            </Mode>
            <ModeCaret>
              <ChevronDown size={16} />
            </ModeCaret>
            <Mode $w={86} $ml={22}>
              <ModeIcon>
                <PrototypeIcon />
              </ModeIcon>
              <ModeLabel $active>PROTOTYPE</ModeLabel>
            </Mode>
            <Mode $w={51} $ml={39}>
              <ModeIcon>
                <InspectIcon />
              </ModeIcon>
              <ModeLabel>INSPECT</ModeLabel>
            </Mode>
          </Modes>
          <HeaderTools>
            <ToolSlot>
              <Search size={30} strokeWidth={1.7} />
            </ToolSlot>
            <ToolSlot>
              <PlusChatIcon />
            </ToolSlot>
            <ToolSlot>
              <Play size={28} strokeWidth={1.7} />
            </ToolSlot>
            <ShareButton>
              <Users size={20} />
              Share
            </ShareButton>
            <HeaderRule $h={26} />
            <ToolSlot>
              <Bell size={26} strokeWidth={1.7} />
            </ToolSlot>
            <Avatar>S</Avatar>
          </HeaderTools>
        </Header>

        <Canvas>
          <Node $x={1294} $y={65}>
            <BackFrame $w={340} />
          </Node>
          <Node $x={1634} $y={65}>
            <BackFrame $w={57} />
          </Node>

          <Node $x={13} $y={76} $z={3}>
            <Toolbar>
              <ToolItem $h={85}>
                <AddCircle>
                  <Plus size={26} strokeWidth={2.4} />
                </AddCircle>
                <ToolLabel $gap={5}>Add</ToolLabel>
              </ToolItem>
              {tools.map((t) => (
                <ToolItem key={t.label} $h={t.h}>
                  <ToolIcon>{t.icon}</ToolIcon>
                  <ToolLabel $gap={t.gap}>{t.label}</ToolLabel>
                </ToolItem>
              ))}
            </Toolbar>
          </Node>

          <Node $x={227} $y={176}>
            <Column>
              <FlowBar $h={37} $ml={3}>
                <FlowCell $w={27}>
                  <DragDots color="#a89ce8" />
                </FlowCell>
                <FlowCell $w={104} $rule>
                  <Play size={22} strokeWidth={1.8} />
                  Flow 1
                </FlowCell>
                <FlowCell $w={38} $rule>
                  <Ellipsis size={22} strokeWidth={3} />
                </FlowCell>
              </FlowBar>
              <Caption $mt={3} $mb={5} $ml={3}>
                Quick Expense Entry - Update Favorite Categories
              </Caption>
              <QuickEntryScreen />
            </Column>
          </Node>

          <Node $x={743} $y={223}>
            <Column>
              <FlowBar $h={38}>
                <FlowCell $w={27}>
                  <DragDots color="#a89ce8" />
                </FlowCell>
                <FlowCell $w={234} $rule>
                  <Play size={22} strokeWidth={1.8} />
                  Expense Tracker Pro
                </FlowCell>
                <FlowCell $w={38} $rule>
                  <Ellipsis size={22} strokeWidth={3} />
                </FlowCell>
              </FlowBar>
              <Caption $mt={2} $mb={7}>
                Quick Expense Entry
              </Caption>
              <ExpenseProScreen />
            </Column>
          </Node>

          <Node $x={1100} $y={76} $z={4}>
            <Panel>
              <PanelHead>
                <DragDots color="#a9a6c0" />
                <Brand>
                  VisilyAi
                  <BrandSpark>
                    <Sparkle />
                  </BrandSpark>
                </Brand>
                <CreditChip>
                  <CreditBolt />
                  <CreditCount>200</CreditCount> credits left
                </CreditChip>
                <HeadIcons>
                  <MessageSquarePlus size={28} strokeWidth={1.8} />
                  <History size={27} strokeWidth={1.8} />
                  <CircleHelp size={27} strokeWidth={1.8} />
                  <VRule $h={26} />
                  <Minus size={28} strokeWidth={2.4} />
                </HeadIcons>
              </PanelHead>
              <PanelBody>
                <MessageCard>
                  <Preview>
                    <PreviewScale>
                      <QuickEntryScreen plain />
                    </PreviewScale>
                  </Preview>
                  <CardActions>
                    <BoardButton>Add to board</BoardButton>
                    <StyleSelect>
                      <Swatch $c={blue} $first />
                      <Swatch $c="#4f5b6e" />
                      <Swatch $c="#f1f2f5" />
                      <StyleName>AI style 1</StyleName>
                      <ChevronDown size={20} />
                    </StyleSelect>
                    <Feedback>
                      <ThumbsUp size={27} strokeWidth={1.8} />
                      <ThumbsDown size={27} strokeWidth={1.8} />
                    </Feedback>
                  </CardActions>
                </MessageCard>
                <Reply>
                  I have updated the Quick Expense Entry screen by replacing the
                  <br />
                  favorite categories with more common and frequently used ones:
                  <br />
                  Food, Rent, Transport, Entertainment, Health, and Utilities. Let
                  <br />
                  me know if you'd like any other changes or additions.
                </Reply>
                <InputBox>
                  <Prompt>
                    add prototype flow as same as "QuickExpenseEntry" and make
                    <br />
                    newly created screen as home screen
                  </Prompt>
                  <InputFoot>
                    <ImageUp size={24} strokeWidth={1.9} />
                    <CursorFrameIcon />
                    <Ellipsis size={24} strokeWidth={2.4} />
                    <Counter>94/4,000</Counter>
                    <SendButton>
                      <ArrowUp size={28} strokeWidth={2.2} />
                    </SendButton>
                  </InputFoot>
                  <RedMark $l={3} $t={5} $w={512} $h={76} />
                  <RedMark $l={478} $t={84} $w={50} $h={44} />
                </InputBox>
              </PanelBody>
            </Panel>
          </Node>
        </Canvas>
      </Page>
    </>
  );
}
